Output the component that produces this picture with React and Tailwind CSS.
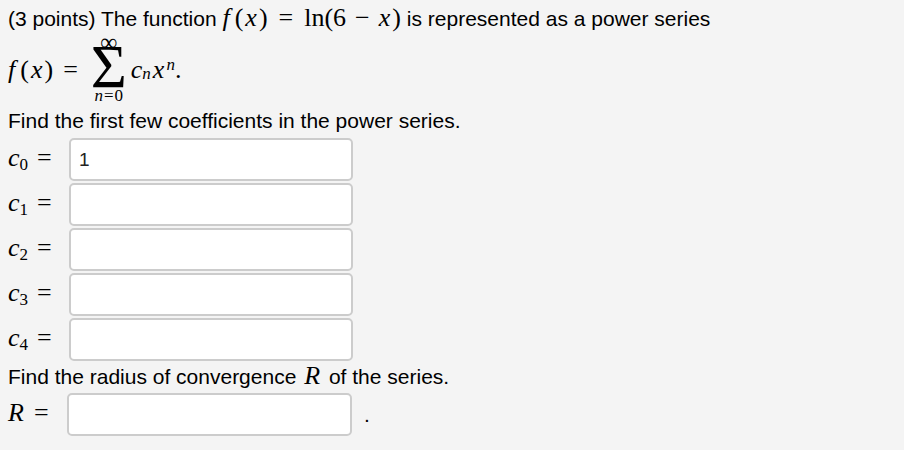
export default function App() {
  const rows = ["0", "1", "2", "3", "4"];

  return (
    <div className="w-[904px] h-[450px] bg-[#f4f4f4] text-black px-2 pt-[3px] text-[21px] leading-[30px] font-['Liberation_Sans',Arial,sans-serif]">
      <p className="h-[31px]">
        (3 points) The function{" "}
        <M>
          <i className="pr-[5px]">f</i>(<i className="px-[2px]">x</i>)
          <span className="mx-[11px]">=</span>ln(6<span className="mx-[9px]">−</span>
          <i className="pr-[2px]">x</i>)
        </M>{" "}
        is represented as a power series
      </p>

      <div className="flex h-[72px]">
        <M className="mt-[21px] leading-[30px]">
          <i className="pr-[5px]">f</i>(<i className="px-[2px]">x</i>)
          <span className="mx-[10px]">=</span>
        </M>
        <div className="flex flex-col items-center w-[34px] ml-[4px] font-['Liberation_Serif','Times_New_Roman',serif]">
          <span className="text-[24px] leading-[14px] h-[14px] mt-[1px]">∞</span>
          <span className="text-[62px] leading-[40px] h-[40px] -mt-[3px]">Σ</span>
          <span className="relative z-10 text-[17px] leading-[16px] h-[16px] mt-[2px]">
            <i>n</i>
            <span className="mx-[1px]">=</span>0
          </span>
        </div>
        <M className="mt-[21px] ml-[5px] leading-[30px]">
          <i>c</i>
          <sub className="text-[17px] italic -bottom-[1px] pr-[2px]">n</sub>
          <i className="pr-[2px]">x</i>
          <sup className="text-[17px] italic">n</sup>.
        </M>
      </div>

      <p>Find the first few coefficients in the power series.</p>

      <div className="flex flex-col gap-[2px] mt-[2px]">
        {rows.map((n) => (
          <div key={n} className="flex items-center">
            <div className="w-[61px] h-[43px] pb-[4px] flex items-center">
              <M>
                <i>c</i>
                <sub className="text-[17px]">{n}</sub>
                <span className="ml-[9px]">=</span>
              </M>
            </div>
            <input
              defaultValue={n === "0" ? "1" : ""}
              className="w-[284px] h-[43px] bg-white border-2 border-[#cccccc] rounded-[5px] px-[8px] text-[19px] text-[#222] outline-none"
            />
          </div>
        ))}
      </div>

      <p>
        Find the radius of convergence{" "}
        <M className="ml-[2px]">
          <i className="pr-[3px]">R</i>
        </M>{" "}
        of the series.
      </p>

      <div className="flex items-center mt-[1px]">
        <div className="w-[59px] h-[43px] pb-[4px] flex items-center">
          <M>
            <i className="pr-[2px]">R</i>
            <span className="ml-[8px]">=</span>
          </M>
        </div>
        <input className="w-[285px] h-[43px] bg-white border-2 border-[#cccccc] rounded-[5px] px-[8px] outline-none" />
        <span className="ml-[12px]">.</span>
      </div>
    </div>
  );
}

function M({ children, className = "" }) {
  return (
    <span className={`text-[26px] font-['Liberation_Serif','Times_New_Roman',serif] ${className}`}>
      {children}
    </span>
  );
}
